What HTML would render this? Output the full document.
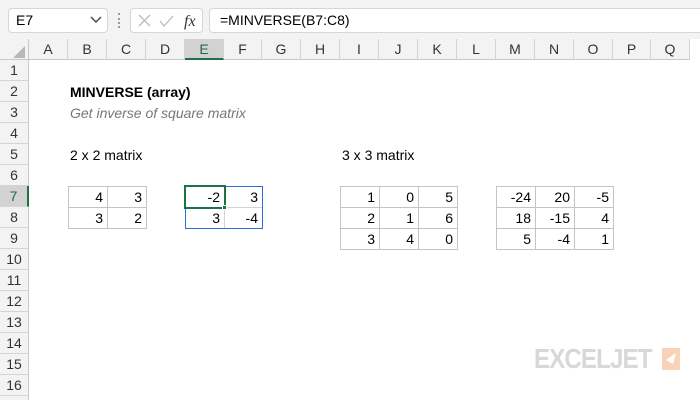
<!DOCTYPE html>
<html><head><meta charset="utf-8"><style>
*{margin:0;padding:0;box-sizing:border-box}
html,body{width:700px;height:400px;overflow:hidden}
body{background:#fff;font-family:"Liberation Sans",Calibri,sans-serif;position:relative}
.a{position:absolute}
.top{left:0;top:0;width:700px;height:39px;background:#f3f3f3}
.box{background:#fff;border:1px solid #d6d6d6;border-radius:4px}
.ch{top:39px;height:21px;background:#f3f3f3;border-right:1px solid #d4d4d4;border-bottom:1px solid #c8c8c8;font-size:14px;color:#333;text-align:center;line-height:21px}
.rh{left:0;width:29px;height:21px;background:#f3f3f3;border-bottom:1px solid #d4d4d4;border-right:1px solid #c8c8c8;font-size:14px;color:#333;text-align:center;line-height:21px}
.c{height:21px;font-size:14px;line-height:21px;text-align:right;padding-right:4px;color:#000;border:1px solid #c4c4c4;margin:-1px 0 0 -1px}
.t{font-size:14px;color:#000}
</style></head><body>
<div class="a top"></div>
<div class="a box" style="left:8px;top:8px;width:100px;height:25px"></div>
<div class="a t" style="left:16px;top:12px;font-size:14px">E7</div>
<svg class="a" style="left:90px;top:16px" width="12" height="8"><path d="M1 1l5 5 5-5" fill="none" stroke="#444" stroke-width="1.4"/></svg>
<div class="a" style="left:118px;top:13px;width:2px;height:15px;border-left:2px dotted #999"></div>
<div class="a box" style="left:130px;top:8px;width:73px;height:25px"></div>
<svg class="a" style="left:135px;top:12px" width="70" height="18"><path d="M4 3l11 11M15 3L4 14" stroke="#bbb" stroke-width="1.3"/><path d="M25 9l4 5 9-10" fill="none" stroke="#bbb" stroke-width="1.3"/><text x="49" y="14" font-family="Liberation Serif" font-style="italic" font-size="16" fill="#333">fx</text></svg>
<div class="a box" style="left:209px;top:8px;width:500px;height:25px"></div>
<div class="a t" style="left:220px;top:12px">=MINVERSE(B7:C8)</div>
<div class="a" style="left:0;top:39px;width:29px;height:21px;background:#f3f3f3;border-right:1px solid #c8c8c8;border-bottom:1px solid #c8c8c8"></div>
<svg class="a" style="left:13px;top:46px" width="12" height="12"><path d="M12 0V12H0Z" fill="#b8b8b8"/></svg>
<div id="hdr"></div>
<div class="a" style="left:70px;top:84px;font-size:14px;font-weight:bold">MINVERSE (array)</div>
<div class="a" style="left:70px;top:105px;font-size:14px;font-style:italic;color:#777">Get inverse of square matrix</div>
<div class="a t" style="left:70px;top:147px">2 x 2 matrix</div>
<div class="a t" style="left:342px;top:147px">3 x 3 matrix</div>
<div class="a" style="left:534px;top:343px;font-size:28px;font-weight:bold;color:#d8d8d8;letter-spacing:-1px;transform:scaleX(0.86);transform-origin:0 0;white-space:nowrap">EXCELJET</div>
<div class="a" style="left:662px;top:348px;width:18px;height:22px;background:#f9d3b7"></div>
<svg class="a" style="left:662px;top:348px" width="18" height="22"><path d="M14 5L4 12l7 4z" fill="#fff"/></svg>
<script>
var cols="ABCDEFGHIJKLMNOPQ",h="";
for(var i=0;i<17;i++){var l=Math.round(29+i*38.9),r=Math.round(29+(i+1)*38.9);
h+='<div class="a ch" style="left:'+l+'px;width:'+(r-l)+'px;'+(i==4?'background:#d2d2d2;color:#1d6b3e;border-bottom:2px solid #1e7145;':'')+'">'+cols[i]+'</div>';}
for(var j=0;j<17;j++){h+='<div class="a rh" style="top:'+(60+j*21)+'px;'+(j==6?'background:#d2d2d2;color:#1d6b3e;border-right:2px solid #1e7145;':'')+'">'+(j+1)+'</div>';}
function cx(i){return Math.round(29+i*38.9)}
function cell(ci,ri,v,ex){h+='<div class="a c" style="left:'+(cx(ci)+1)+'px;top:'+(60+ri*21+1)+'px;width:'+(cx(ci+1)-cx(ci)+1)+'px;height:22px;'+(ex||'')+'">'+v+'</div>';}
var d=[[1,6,4],[2,6,3],[1,7,3],[2,7,2],[8,6,1],[9,6,0],[10,6,5],[8,7,2],[9,7,1],[10,7,6],[8,8,3],[9,8,4],[10,8,0],[12,6,-24],[13,6,20],[14,6,-5],[12,7,18],[13,7,-15],[14,7,4],[12,8,5],[13,8,-4],[14,8,1]];
d.forEach(function(e){cell(e[0],e[1],e[2]);});
var b='border-color:#d4d4d4;';
cell(4,6,'-2',b);cell(5,6,'3',b);cell(4,7,'3',b);cell(5,7,'-4',b);
h+='<div class="a" style="left:'+cx(4)+'px;top:186px;width:'+(cx(6)-cx(4)+1)+'px;height:43px;border:1px solid #2a6fd6"></div>';
h+='<div class="a" style="left:'+(cx(4)-1)+'px;top:185px;width:'+(cx(5)-cx(4)+3)+'px;height:24px;border:2px solid #1e7145"></div>';
h+='<div class="a" style="left:'+(cx(5)-2)+'px;top:205px;width:5px;height:5px;background:#1e7145;border:1px solid #fff"></div>';
document.getElementById('hdr').outerHTML=h;
</script>
</body></html>
